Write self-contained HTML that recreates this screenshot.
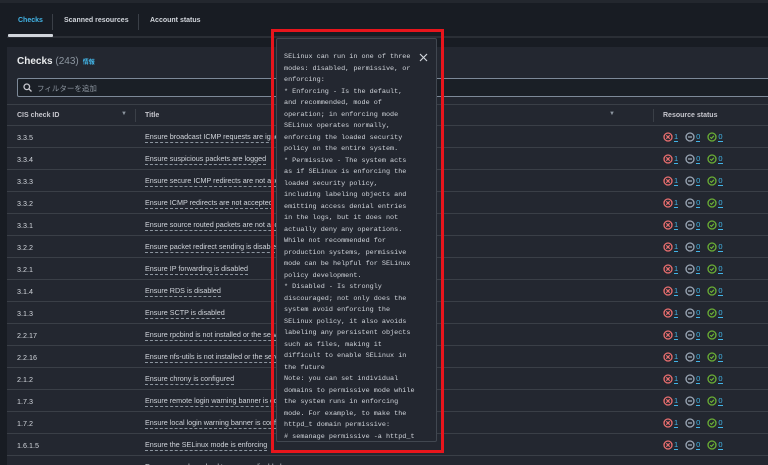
<!DOCTYPE html>
<html><head><meta charset="utf-8"><style>
*{margin:0;padding:0;box-sizing:border-box}
html,body{width:768px;height:465px;overflow:hidden}
body{background:#181c23;font-family:"Liberation Sans","Noto Sans CJK JP",sans-serif;color:#d1d5db;position:relative}
.top{position:absolute;left:0;top:0;width:768px;height:3px;background:#23272e}
.tabs{position:absolute;top:0;left:7px;height:38px;width:761px;border-bottom:2px solid #2a2e35}
.tab{position:absolute;top:17px;font-size:7px;font-weight:bold;color:#d1d5db}
.sep{position:absolute;top:14px;width:1px;height:16px;background:#3a3f47}
.ul{position:absolute;left:1px;top:34px;width:45px;height:3px;background:#d1d5db;border-radius:1px}
.cont{position:absolute;left:7px;top:47px;width:761px;height:420px;background:#232730}
.h{position:absolute;left:17px;top:56px;font-size:10px;font-weight:bold;color:#e9ebed}
.h span{font-weight:normal;color:#8d96a0}
.h i{font-style:normal;font-size:6px;color:#42b4e6;margin-left:4px}
.filter{position:absolute;left:17px;top:78px;width:760px;height:19px;border:1px solid #7d8998;border-radius:2px;background:#1a1f26;font-size:7.5px;color:#8d96a0;padding:4px 0 0 19px}
.th{position:absolute;top:104px;left:7px;width:761px;height:22px;border-top:1px solid #3a3f47;border-bottom:1px solid #3a3f47;font-size:7px;font-weight:bold;color:#c6c6cd}
.row{position:absolute;left:7px;width:761px;height:22px;border-bottom:1px solid #3a3f47;font-size:7.2px;color:#d1d5db}
.row .id{position:absolute;left:10px;top:7px}
.row .t{position:absolute;left:138px;top:6px;border-bottom:1px dashed #8d96a0;line-height:10px;white-space:nowrap}
.st{position:absolute;display:flex;gap:7px}
.st b{display:flex;align-items:center;font-weight:normal;color:#42b4e6;font-size:7.5px}
.st b span{border-bottom:1px solid #42b4e6;line-height:9px;margin-left:1px}
.pop{position:absolute;left:276px;top:38px;width:161px;height:404px;background:#232730;border:1px solid #414750;border-radius:2px}
.pt{position:absolute;left:284px;top:52px;font-family:"Liberation Mono",monospace;font-size:6.8px;line-height:11.5px;color:#d1d5db;white-space:pre}
.red{position:absolute;left:271px;top:29px;width:173px;height:424px;border:3px solid #e8151c}
</style></head><body>
<div class="top"></div>
<div class="tabs">
<div class="tab" style="left:11px;color:#42b4e6">Checks</div>
<div class="sep" style="left:45px"></div>
<div class="tab" style="left:57px">Scanned resources</div>
<div class="sep" style="left:131px"></div>
<div class="tab" style="left:143px">Account status</div>
<div class="ul"></div>
</div>
<div class="cont"></div>
<div class="h">Checks <span>(243)</span><i>情報</i></div>
<div class="filter"><svg style="position:absolute;left:5px;top:4px" width="9" height="9" viewBox="0 0 9 9"><circle cx="3.8" cy="3.8" r="2.8" fill="none" stroke="#c6c6cd" stroke-width="1.3"/><path d="M6 6L8.5 8.5" stroke="#c6c6cd" stroke-width="1.3"/></svg>フィルターを追加</div>
<div class="th"><span style="position:absolute;left:10px;top:7px">CIS check ID</span><span style="position:absolute;left:114px;top:6px;font-size:6px;color:#8d96a0">▼</span><span style="position:absolute;left:128px;top:4px;width:1px;height:13px;background:#3a3f47"></span><span style="position:absolute;left:138px;top:7px">Title</span><span style="position:absolute;left:602px;top:6px;font-size:6px;color:#8d96a0">▼</span><span style="position:absolute;left:646px;top:4px;width:1px;height:13px;background:#3a3f47"></span><span style="position:absolute;left:656px;top:7px">Resource status</span></div>

<div class="row" style="top:126px"><span class="id">3.3.5</span><span class="t">Ensure broadcast ICMP requests are ignored</span></div>
<div class="row" style="top:148px"><span class="id">3.3.4</span><span class="t">Ensure suspicious packets are logged</span></div>
<div class="row" style="top:170px"><span class="id">3.3.3</span><span class="t">Ensure secure ICMP redirects are not accepted</span></div>
<div class="row" style="top:192px"><span class="id">3.3.2</span><span class="t">Ensure ICMP redirects are not accepted</span></div>
<div class="row" style="top:214px"><span class="id">3.3.1</span><span class="t">Ensure source routed packets are not accepted</span></div>
<div class="row" style="top:236px"><span class="id">3.2.2</span><span class="t">Ensure packet redirect sending is disabled</span></div>
<div class="row" style="top:258px"><span class="id">3.2.1</span><span class="t">Ensure IP forwarding is disabled</span></div>
<div class="row" style="top:280px"><span class="id">3.1.4</span><span class="t">Ensure RDS is disabled</span></div>
<div class="row" style="top:302px"><span class="id">3.1.3</span><span class="t">Ensure SCTP is disabled</span></div>
<div class="row" style="top:324px"><span class="id">2.2.17</span><span class="t">Ensure rpcbind is not installed or the service</span></div>
<div class="row" style="top:346px"><span class="id">2.2.16</span><span class="t">Ensure nfs-utils is not installed or the service</span></div>
<div class="row" style="top:368px"><span class="id">2.1.2</span><span class="t">Ensure chrony is configured</span></div>
<div class="row" style="top:390px"><span class="id">1.7.3</span><span class="t">Ensure remote login warning banner is configured</span></div>
<div class="row" style="top:412px"><span class="id">1.7.2</span><span class="t">Ensure local login warning banner is configured</span></div>
<div class="row" style="top:434px"><span class="id">1.6.1.5</span><span class="t">Ensure the SELinux mode is enforcing</span></div>
<div class="row" style="top:456px;height:9px;border:none;overflow:hidden"><span class="id">1.4.1</span><span class="t">Ensure core dump backtraces are disabled</span></div>

<div id="sts"></div>
<script>
var s='';for(var i=0;i<15;i++){var y=126+i*22;s+='<div class="st" style="left:663px;top:'+(y+6)+'px"><b><svg width="10" height="10" viewBox="0 0 10 10"><circle cx="5" cy="5" r="4" fill="none" stroke="#eb6f6f" stroke-width="1.3"/><path d="M3.3 3.3L6.7 6.7M6.7 3.3L3.3 6.7" stroke="#eb6f6f" stroke-width="1.2"/></svg><span>1</span></b><b><svg width="10" height="10" viewBox="0 0 10 10"><circle cx="5" cy="5" r="4" fill="none" stroke="#9ba7b6" stroke-width="1.3"/><path d="M3 5H7" stroke="#9ba7b6" stroke-width="1.3"/></svg><span>0</span></b><b><svg width="10" height="10" viewBox="0 0 10 10"><circle cx="5" cy="5" r="4" fill="none" stroke="#6aaf35" stroke-width="1.3"/><path d="M3.2 5.2L4.5 6.4L6.9 3.8" fill="none" stroke="#6aaf35" stroke-width="1.2"/></svg><span>0</span></b></div>';}
document.getElementById('sts').innerHTML=s;
</script>

<div class="pop"></div>
<svg style="position:absolute;left:419px;top:53px" width="9" height="9" viewBox="0 0 9 9"><path d="M1 1L8 8M8 1L1 8" stroke="#d1d5db" stroke-width="1.2"/></svg>
<div class="pt">SELinux can run in one of three
modes: disabled, permissive, or
enforcing:
* Enforcing - Is the default,
and recommended, mode of
operation; in enforcing mode
SELinux operates normally,
enforcing the loaded security
policy on the entire system.
* Permissive - The system acts
as if SELinux is enforcing the
loaded security policy,
including labeling objects and
emitting access denial entries
in the logs, but it does not
actually deny any operations.
While not recommended for
production systems, permissive
mode can be helpful for SELinux
policy development.
* Disabled - Is strongly
discouraged; not only does the
system avoid enforcing the
SELinux policy, it also avoids
labeling any persistent objects
such as files, making it
difficult to enable SELinux in
the future
Note: you can set individual
domains to permissive mode while
the system runs in enforcing
mode. For example, to make the
httpd_t domain permissive:
# semanage permissive -a httpd_t</div>
<div class="red"></div>
</body></html>
